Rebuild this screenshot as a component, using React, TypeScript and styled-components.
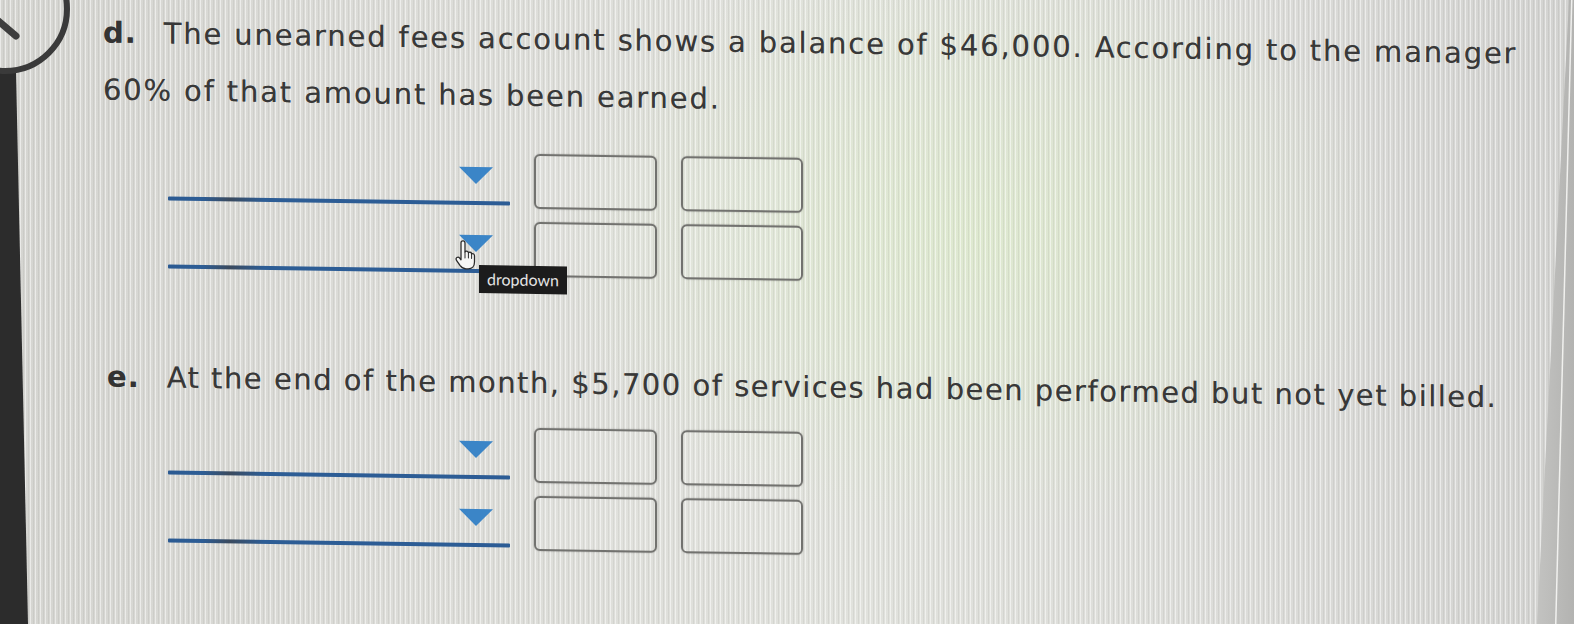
import React from "react";
import styled, { createGlobalStyle } from "styled-components";

const Global = createGlobalStyle`
  html, body { margin: 0; padding: 0; }
  body { width: 1574px; height: 624px; overflow: hidden; background: #dadad5; }
`;

const Screen = styled.div`
  position: relative;
  width: 1574px;
  height: 624px;
  overflow: hidden;
  background-color: #dadad6;
  background-image:
    repeating-linear-gradient(
      90deg,
      rgba(255, 255, 255, 0.5) 0 1px,
      rgba(255, 255, 255, 0) 1px 3px,
      rgba(110, 110, 105, 0.1) 3px 4px,
      rgba(255, 255, 255, 0) 4px 5px
    ),
    radial-gradient(ellipse 420px 300px at 62% 38%, rgba(222, 236, 204, 0.75), rgba(222, 236, 204, 0)),
    linear-gradient(90deg, #d5d5d1 0%, #dcdcd8 25%, #e1e2dd 55%, #dcdcd9 80%, #d3d3d1 100%);
`;

const Page = styled.main`
  height: 100%;
  box-sizing: border-box;
  padding: 0 0 0 103px;
  transform-origin: 0 0;
  transform: skewY(0.85deg);
  font-family: "DejaVu Sans", Verdana, sans-serif;
  color: #383838;
`;

const Question = styled.p<{ $top: number; $indent?: number; $spacing: number }>`
  margin: ${(p) => p.$top}px 0 0 ${(p) => p.$indent ?? 0}px;
  font-size: 29px;
  letter-spacing: ${(p) => p.$spacing}px;
  line-height: 57px;
  white-space: nowrap;
  text-shadow: 0 0 0.6px rgba(0, 0, 0, 0.35);
`;

const Label = styled.b`
  font-weight: 700;
  letter-spacing: 1px;
  color: #333;
  margin-right: 27px;
`;

const AnswerGrid = styled.div<{ $top: number }>`
  display: grid;
  grid-template-columns: 342px 123px 122px;
  grid-auto-rows: 55px;
  column-gap: 24px;
  row-gap: 13px;
  margin: ${(p) => p.$top}px 0 0 65px;
`;

const Dropdown = styled.div`
  position: relative;
  display: flex;
  flex-direction: column;
  align-items: flex-end;
  justify-content: flex-end;
  padding-bottom: 3px;
  box-sizing: border-box;
`;

const Arrow = styled.span`
  width: 0;
  height: 0;
  border-left: 17.5px solid transparent;
  border-right: 17.5px solid transparent;
  border-top: 17px solid #3b85c7;
  margin: 0 17px 17px 0;
`;

const Underline = styled.span`
  align-self: stretch;
  height: 4px;
  border-radius: 1px;
  background: linear-gradient(90deg, #2b5a92 0%, #2d5d95 10%, #3a4a5e 18%, #2d5d95 28%, #2c5c95 100%);
`;

const Box = styled.div`
  box-sizing: border-box;
  border: 2px solid #72726f;
  border-radius: 6px;
  background: rgba(255, 255, 255, 0.08);
  box-shadow: 0 0 1.5px rgba(0, 0, 0, 0.35);
`;

const Tooltip = styled.div`
  position: absolute;
  left: 311px;
  top: 44px;
  width: 88px;
  height: 28px;
  box-sizing: border-box;
  background: #1c1c1c;
  color: #e4e4e4;
  font-family: Lato, "Open Sans", sans-serif;
  font-size: 16px;
  line-height: 28px;
  text-align: center;
  z-index: 1;
`;

const Cursor = styled.svg`
  position: absolute;
  left: 286px;
  top: 18px;
  width: 24px;
  height: 32px;
  z-index: 2;
`;

const BackButton = styled.svg`
  position: absolute;
  left: 0;
  top: 0;
  width: 90px;
  height: 90px;
`;

const LeftBezel = styled.div`
  position: absolute;
  left: 0;
  top: 72px;
  width: 28px;
  bottom: 0;
  background: #2c2c2c;
  clip-path: polygon(0 0, 16px 0, 100% 100%, 0 100%);
`;

const RightBezel = styled.div`
  position: absolute;
  top: 0;
  right: 0;
  width: 40px;
  height: 100%;
  background: linear-gradient(90deg, #c4c4c2, #b3b3b1);
  clip-path: polygon(35px 0, 100% 0, 100% 100%, 3px 100%);
`;

const RightGlint = styled.div`
  position: absolute;
  top: 0;
  right: 0;
  width: 40px;
  height: 100%;
  background: rgba(250, 250, 248, 0.85);
  clip-path: polygon(37px 0, 38.5px 0, 22.5px 100%, 21px 100%);
`;

function HandCursor() {
  return (
    <Cursor viewBox="0 0 24 32">
      <path
        d="M9 2C10.4 2 11 3 11 4V13C11.5 12.3 12.5 12 13.3 12.3C14 12.6 14.3 13.2 14.4 13.8C15 13.2 16 13 16.8 13.4C17.4 13.8 17.6 14.4 17.6 15C18.3 14.6 19.2 14.6 19.8 15.1C20.4 15.6 20.5 16.3 20.5 17V23C20.5 27 18 30 14 30H12C9 30 7.5 28.5 6 26.5L2.5 21.5C1.8 20.5 2 19.3 2.9 18.7C3.8 18.1 5 18.4 5.7 19.3L7 21V4C7 3 7.6 2 9 2Z"
        fill="#f6f6f4"
        stroke="#2a2a2a"
        strokeWidth="1.3"
        strokeLinejoin="round"
      />
      <path d="M11 13V19M14.4 13.8V19M17.6 15V19.5" stroke="#2a2a2a" strokeWidth="1" strokeLinecap="round" />
    </Cursor>
  );
}

type Row = { tooltip?: boolean };

function Answers({ top, rows }: { top: number; rows: Row[] }) {
  return (
    <AnswerGrid $top={top}>
      {rows.map((r, i) => (
        <React.Fragment key={i}>
          <Dropdown>
            <Arrow />
            <Underline />
            {r.tooltip && (
              <>
                <HandCursor />
                <Tooltip>dropdown</Tooltip>
              </>
            )}
          </Dropdown>
          <Box />
          <Box />
        </React.Fragment>
      ))}
    </AnswerGrid>
  );
}

export default function App() {
  return (
    <>
      <Global />
      <Screen>
        <Page>
          <Question $top={3} $spacing={1.85}>
            <Label>d.</Label>The unearned fees account shows a balance of $46,000. According to the manager
            <br />
            60% of that amount has been earned.
          </Question>
          <Answers top={29} rows={[{}, { tooltip: true }]} />
          <Question $top={78} $indent={4} $spacing={1.5}>
            <Label>e.</Label>At the end of the month, $5,700 of services had been performed but not yet billed.
          </Question>
          <Answers top={16} rows={[{}, {}]} />
        </Page>
        <LeftBezel />
        <BackButton viewBox="0 0 90 90">
          <circle cx="5" cy="9" r="62" fill="none" stroke="#3a3a3a" strokeWidth="6" />
          <line x1="-4" y1="19" x2="16" y2="36" stroke="#3d3d3d" strokeWidth="7" strokeLinecap="round" />
        </BackButton>
        <RightBezel />
        <RightGlint />
      </Screen>
    </>
  );
}
